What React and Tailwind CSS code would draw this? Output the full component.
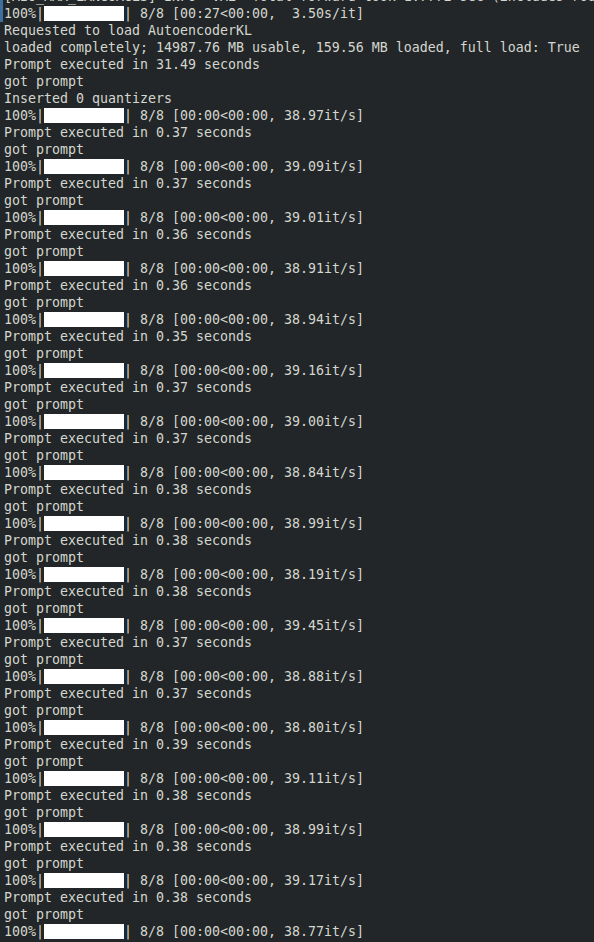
import React from "react";

const Bar = () => (
  <span className="inline-block w-[80px] h-[15px] bg-white align-[-3px]" />
);

const Progress = ({ rate, time = "00:00" }) => (
  <div>
    100%|<Bar />| 8/8 [{time}{"<"}00:00, {rate}]
  </div>
);

const runs = [
  ["39.09", "0.37"],
  ["39.01", "0.36"],
  ["38.91", "0.36"],
  ["38.94", "0.35"],
  ["39.16", "0.37"],
  ["39.00", "0.37"],
  ["38.84", "0.38"],
  ["38.99", "0.38"],
  ["38.19", "0.38"],
  ["39.45", "0.37"],
  ["38.88", "0.37"],
  ["38.80", "0.39"],
  ["39.11", "0.38"],
  ["38.99", "0.38"],
  ["39.17", "0.38"],
];

export default function App() {
  return (
    <div
      className="w-[594px] h-[942px] overflow-hidden bg-[#232628] text-[#d3d7cf] whitespace-pre text-[13.29px] leading-[17px]"
      style={{ fontFamily: '"DejaVu Sans Mono", monospace' }}
    >
      <div className="-mt-[12px]">
        <div className="border-l-[3px] border-[#3d6f9f] pl-px">
          <div>[AIO_MAX_LANGUAGES] INFO  VAE  Total forward took 1.7772 sec (includes rou</div>
          <Progress time="00:27" rate=" 3.50s/it" />
        </div>
        <div className="pl-1">
          <div>Requested to load AutoencoderKL</div>
          <div>loaded completely; 14987.76 MB usable, 159.56 MB loaded, full load: True</div>
          <div>Prompt executed in 31.49 seconds</div>
          <div>got prompt</div>
          <div>Inserted 0 quantizers</div>
          <Progress rate="38.97it/s" />
          <div>Prompt executed in 0.37 seconds</div>
          {runs.map(([r, t], i) => (
            <React.Fragment key={i}>
              <div>got prompt</div>
              <Progress rate={`${r}it/s`} />
              <div>Prompt executed in {t} seconds</div>
            </React.Fragment>
          ))}
          <div>got prompt</div>
          <Progress rate="38.77it/s" />
        </div>
      </div>
    </div>
  );
}
